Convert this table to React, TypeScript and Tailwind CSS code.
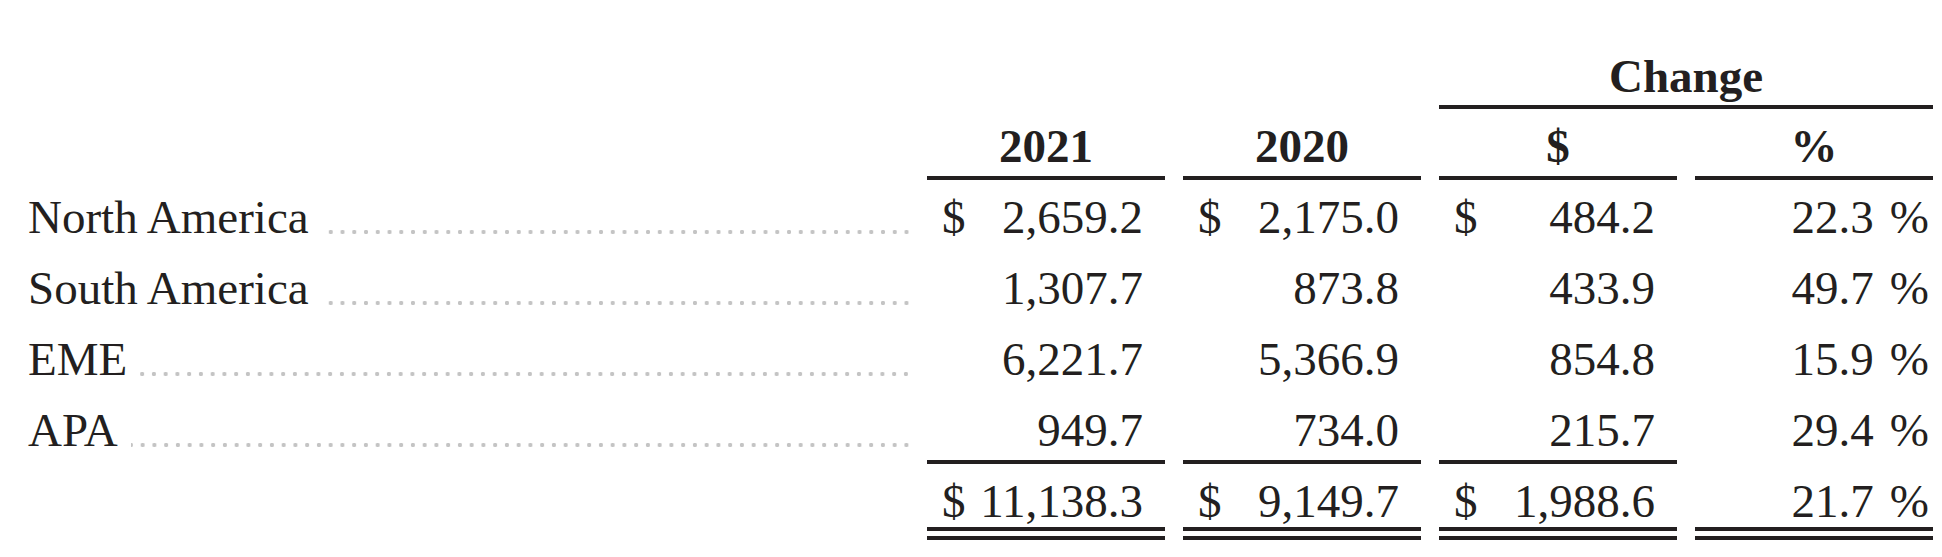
import React from "react";

type Row = {
  label: string;
  a: string;
  b: string;
  c: string;
  d: string;
  dollar?: boolean;
  last?: boolean;
};

const rows: Row[] = [
  { label: "North America", a: "2,659.2", b: "2,175.0", c: "484.2", d: "22.3", dollar: true },
  { label: "South America", a: "1,307.7", b: "873.8", c: "433.9", d: "49.7" },
  { label: "EME", a: "6,221.7", b: "5,366.9", c: "854.8", d: "15.9" },
  { label: "APA", a: "949.7", b: "734.0", c: "215.7", d: "29.4", last: true },
];

function Pct({ value }: { value: string }) {
  return (
    <div className="flex justify-end items-baseline pr-[4px]">
      <span>{value}</span>
      <span className="ml-[16px]">%</span>
    </div>
  );
}

function Num({ value, dollar }: { value: string; dollar?: boolean }) {
  return (
    <div className={`flex items-baseline pl-[15px] pr-[22px] ${dollar ? "justify-between" : "justify-end"}`}>
      {dollar && <span>$</span>}
      <span>{value}</span>
    </div>
  );
}

export default function App() {
  return (
    <div className="w-[1942px] h-[557px] bg-white overflow-hidden">
      <div className="grid grid-cols-[909px_238px_238px_238px_238px] gap-x-[18px] font-['Liberation_Serif','Times_New_Roman',serif] text-[47px] leading-[52px] text-[#231f20]">
        {/* Change header */}
        <div className="col-span-3" />
        <div className="col-span-2 pt-[50px] pb-[3px] border-b-4 border-[#231f20] text-center font-bold">
          Change
        </div>

        {/* Column headers */}
        <div />
        {["2021", "2020", "$", "%"].map((h) => (
          <div key={h} className="pt-[11px] pb-[4px] border-b-4 border-[#231f20] text-center font-bold">
            {h}
          </div>
        ))}

        {/* Data rows */}
        {rows.map((r) => (
          <React.Fragment key={r.label}>
            <div className="pt-[11px] pb-[8px] pl-[28px] flex items-baseline">
              <span>{r.label}</span>
              <span className="flex-1 ml-[13px] -mr-[3px] h-[4px] translate-y-[1px] bg-[radial-gradient(circle,#c4c4c4_1.9px,transparent_2.4px)] bg-[length:11.75px_4px] bg-repeat-x bg-right" />
            </div>
            {[r.a, r.b, r.c].map((v, i) => (
              <div
                key={i}
                className={r.last ? "pt-[11px] pb-[4px] border-b-4 border-[#231f20]" : "pt-[11px] pb-[8px]"}
              >
                <Num value={v} dollar={r.dollar} />
              </div>
            ))}
            <div className="pt-[11px] pb-[8px]">
              <Pct value={r.d} />
            </div>
          </React.Fragment>
        ))}

        {/* Total row */}
        <div />
        {["11,138.3", "9,149.7", "1,988.6"].map((v) => (
          <div key={v} className="pt-[11px]">
            <Num value={v} dollar />
            <div className="h-[13px] border-y-4 border-[#231f20]" />
          </div>
        ))}
        <div className="pt-[11px]">
          <Pct value="21.7" />
          <div className="h-[13px] border-y-4 border-[#231f20]" />
        </div>
      </div>
    </div>
  );
}
